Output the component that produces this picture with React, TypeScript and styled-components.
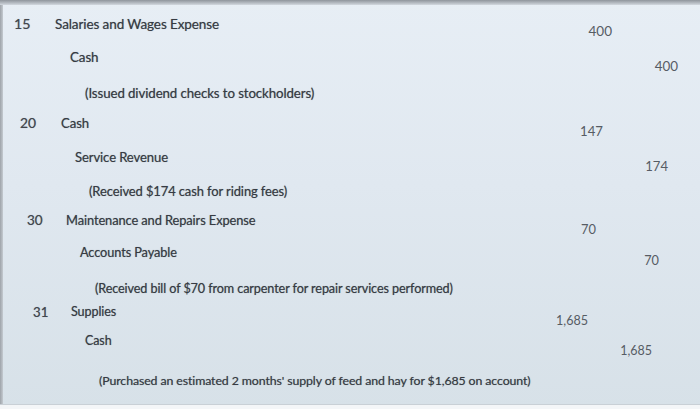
import React from 'react';
import styled, { createGlobalStyle } from 'styled-components';

interface Line {
    date?: string;
    dateX?: number;
    text: string;
    x: number; // left edge of the account / note text
    y: number; // vertical centre of the line in the photo
    h: number; // distance to the next line
    amount?: string;
    right?: number; // right edge of the amount
    drop?: number; // how far the amount sits below the label
}

// the photo is taken at an angle, so every line has its own offsets
const lines: Line[] = [
    { date: '15', dateX: 14, text: 'Salaries and Wages Expense', x: 55, y: 24, h: 33, amount: '400', right: 612, drop: 7 },
    { text: 'Cash', x: 70, y: 57, h: 36, amount: '400', right: 678, drop: 9 },
    { text: '(Issued dividend checks to stockholders)', x: 85, y: 93, h: 30 },
    { date: '20', dateX: 20, text: 'Cash', x: 61, y: 123, h: 34, amount: '147', right: 603, drop: 8 },
    { text: 'Service Revenue', x: 75, y: 157, h: 34, amount: '174', right: 668, drop: 9 },
    { text: '(Received $174 cash for riding fees)', x: 89, y: 191, h: 29 },
    { date: '30', dateX: 27, text: 'Maintenance and Repairs Expense', x: 66, y: 220, h: 32, amount: '70', right: 596, drop: 9 },
    { text: 'Accounts Payable', x: 80, y: 252, h: 37, amount: '70', right: 659, drop: 8 },
    { text: '(Received bill of $70 from carpenter for repair services performed)', x: 95, y: 289, h: 23 },
    { date: '31', dateX: 33, text: 'Supplies', x: 71, y: 312, h: 29, amount: '1,685', right: 588, drop: 9 },
    { text: 'Cash', x: 85, y: 341, h: 40, amount: '1,685', right: 652, drop: 10 },
    { text: "(Purchased an estimated 2 months' supply of feed and hay for $1,685 on account)", x: 99, y: 381, h: 20 },
];

// text gets a little smaller toward the bottom of the photo
const sizeAt = (y: number) => 13.6 - y * 0.0033;

const JournalPhoto = () => {
    return (
        <Screen>
            <GlobalStyle />
            <TopEdge />
            <Body>
                <LeftEdge />
                <Entries>
                    {lines.map((line, i) => (
                        <Row key={i} $h={line.h} $left={line.dateX ?? line.x} $size={sizeAt(line.y)}>
                            {line.date && <DateCell $w={line.x - (line.dateX ?? 0)}>{line.date}</DateCell>}
                            <Label>{line.text}</Label>
                            {line.amount && (
                                <Amount $drop={line.drop ?? 8} $pad={700 - (line.right ?? 600)}>
                                    {line.amount}
                                </Amount>
                            )}
                        </Row>
                    ))}
                </Entries>
            </Body>
            <BottomEdge />
        </Screen>
    );
};

const GlobalStyle = createGlobalStyle`
    html, body {
        margin: 0;
        padding: 0;
        width: 700px;
        height: 409px;
        overflow: hidden;
    }
    body {
        font-family: Lato, "Open Sans", "Liberation Sans", sans-serif;
    }
`;

const Screen = styled.div`
    width: 700px;
    height: 409px;
    display: flex;
    flex-direction: column;
    background: linear-gradient(180deg, #e7eef5 0%, #e0e8f0 45%, #d7e1e8 100%);
    overflow: hidden;
`;

const TopEdge = styled.div`
    height: 5px;
    flex-shrink: 0;
    background: linear-gradient(180deg, #8f959c 0%, #b6bcc3 60%, #d3d9e0 100%);
`;

const Body = styled.div`
    flex: 1;
    display: flex;
    min-height: 0;
`;

const LeftEdge = styled.div`
    width: 3px;
    flex-shrink: 0;
    background: linear-gradient(90deg, #9ea3a9, #c4cad0);
`;

const Entries = styled.div`
    flex: 1;
    display: flex;
    flex-direction: column;
    padding-top: 11px;
`;

const Row = styled.div<{ $h: number; $left: number; $size: number }>`
    height: ${(p) => p.$h}px;
    flex-shrink: 0;
    display: flex;
    align-items: flex-start;
    padding-left: ${(p) => p.$left - 3}px;
    font-size: ${(p) => p.$size}px;
    line-height: 16px;
    color: #363b43;
    text-shadow: 0 0 0.7px rgba(54, 59, 67, 0.55);
`;

const DateCell = styled.span<{ $w: number }>`
    width: ${(p) => p.$w}px;
    flex-shrink: 0;
    font-size: 1.05em;
    color: #41464d;
`;

const Label = styled.span`
    flex: 1;
    white-space: nowrap;
    letter-spacing: -0.1px;
`;

const Amount = styled.span<{ $drop: number; $pad: number }>`
    padding-top: ${(p) => p.$drop}px;
    padding-right: ${(p) => p.$pad}px;
    color: #565c64;
    text-shadow: none;
    white-space: nowrap;
`;

const BottomEdge = styled.div`
    height: 4px;
    flex-shrink: 0;
    background: #f4f6f8;
    border-top: 1px solid #c9d0d6;
`;

export default JournalPhoto;
